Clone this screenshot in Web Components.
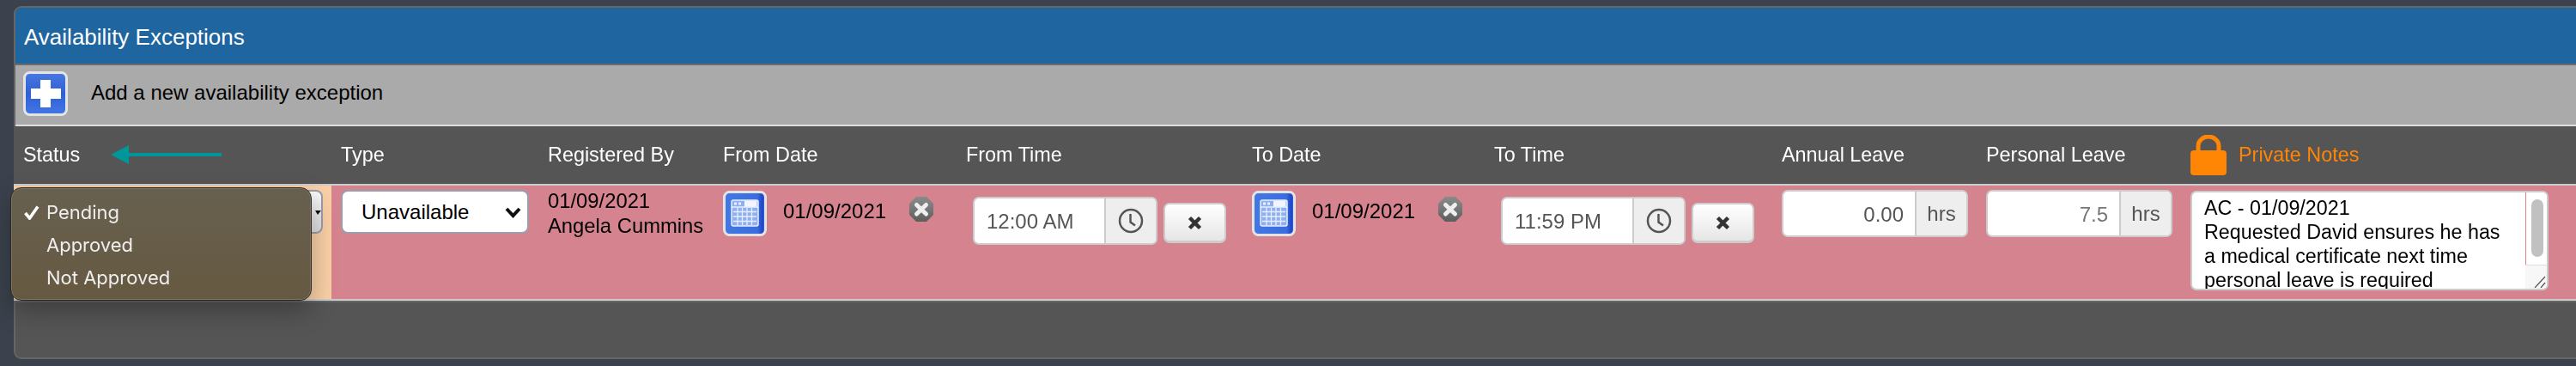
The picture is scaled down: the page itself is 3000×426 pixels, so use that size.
<!DOCTYPE html>
<html><head><meta charset="utf-8"><title>Availability Exceptions</title>
<style>
html,body{margin:0;padding:0;background:#3b424d;height:426px;overflow:hidden}
body{font-family:"Liberation Sans",Arial,sans-serif;font-size:24px;color:#000}
</style></head><body>
<av-panel>
  <span slot="title">Availability Exceptions</span>
  <span slot="add">Add a new availability exception</span>
  <av-head>
    <av-hcell>Status<av-arrow></av-arrow></av-hcell>
    <av-hcell>Type</av-hcell>
    <av-hcell>Registered By</av-hcell>
    <av-hcell>From Date</av-hcell>
    <av-hcell>From Time</av-hcell>
    <av-hcell>To Date</av-hcell>
    <av-hcell>To Time</av-hcell>
    <av-hcell>Annual Leave</av-hcell>
    <av-hcell>Personal Leave</av-hcell>
    <av-hcell class="private"><av-lock></av-lock><span>Private Notes</span></av-hcell>
  </av-head>
  <av-row>
    <av-status></av-status>
    <av-cell><av-select>Unavailable</av-select></av-cell>
    <av-cell><av-reg>01/09/2021<br>Angela Cummins</av-reg></av-cell>
    <av-cell><av-date>01/09/2021</av-date></av-cell>
    <av-cell><av-time>12:00 AM</av-time></av-cell>
    <av-cell><av-date>01/09/2021</av-date></av-cell>
    <av-cell><av-time>11:59 PM</av-time></av-cell>
    <av-cell><av-hours>0.00</av-hours></av-cell>
    <av-cell><av-hours style="--val:#777">7.5</av-hours></av-cell>
    <av-cell><av-notes>AC - 01/09/2021<br>Requested David ensures he has<br>a medical certificate next time<br>personal leave is required</av-notes></av-cell>
  </av-row>
</av-panel>
<script>
const COLS='370px 241px 204px 283px 333px 282px 335px 238px 238px 460px';
function def(name,html){
  const t=document.createElement('template');t.innerHTML=html;
  customElements.define(name,class extends HTMLElement{
    constructor(){super();this.attachShadow({mode:'open'}).appendChild(t.content.cloneNode(true));}
  });
}
def('av-panel',`<style>
:host{display:block;margin:7px 0 0 16px;width:2984px;height:411px;box-sizing:border-box;border:solid #666;border-width:2px 0 2px 2px;border-radius:9px 0 0 9px;background:#555;position:relative;filter:blur(.4px)}
.title{height:65px;background:#1f659f;color:#fff;font-size:26px;display:flex;align-items:center;padding:3px 0 0 10px;box-sizing:border-box;border-radius:7px 0 0 0}
.add{height:69px;background:#aaa;border-top:2px solid #6b6b6b;border-bottom:2px solid #ddd;display:flex;align-items:center;gap:27px;padding-left:9px;font-size:24px;box-sizing:content-box}
.add span{display:block;margin-bottom:5px}
svg{display:block;margin-bottom:3px}
</style>
<div class="title"><slot name="title"></slot></div>
<div class="add">
<svg width="52" height="52" viewBox="0 0 52 52"><defs><linearGradient id="p" x1="0" y1="0" x2="0" y2="1"><stop offset="0" stop-color="#4a79e0"/><stop offset=".5" stop-color="#2f5fd6"/><stop offset="1" stop-color="#4477e4"/></linearGradient></defs>
<rect x="1.500" y="1.500" width="49" height="49" rx="6" fill="url(#p)" stroke="#e4e4e4" stroke-width="3"/>
<path d="M20 10h12v10h12v12H32v10H20V32H9V20h11z" fill="#fff"/></svg>
<span><slot name="add"></slot></span></div>
<slot></slot>`);
def('av-head',`<style>:host{display:grid;grid-template-columns:${COLS};height:67px;margin-left:-2px;color:#fff;background:#555}</style><slot></slot>`);
def('av-hcell',`<style>:host{display:flex;align-items:center;padding-left:11px;font-size:23.400px;position:relative;white-space:nowrap}
:host(.private){color:#ff8505;gap:14px}</style><slot></slot>`);
def('av-arrow',`<style>:host{display:block;position:absolute;left:113px;top:22px}svg{display:block}</style>
<svg width="130" height="22" viewBox="0 0 130 22"><path d="M0 11 21 0v9h108v4H21v9z" fill="#00979a"/></svg>`);
def('av-lock',`<style>:host{display:block}svg{display:block}</style>
<svg width="42" height="47" viewBox="0 0 42 47"><rect x="0" y="18" width="42" height="29" rx="4" fill="#ff8505"/><path d="M9 20V13a12 11 0 0 1 24 0v7" fill="none" stroke="#ff8505" stroke-width="5"/></svg>`);
def('av-row',`<style>:host{display:grid;grid-template-columns:${COLS};height:132px;margin-left:-2px;background:#d5838f;border-top:2px solid #ccc;border-bottom:2px solid #ccc;box-shadow:0 2px 0 #666;position:relative}</style><slot></slot>`);
def('av-cell',`<style>:host{display:block;padding-left:11px;min-width:0}</style><slot></slot>`);
def('av-status',`<style>
:host{display:block;background:#f9cfa5;position:relative;padding:5px 10px 0 11px}
.sel{height:51px;box-sizing:border-box;border:2px solid #9a9eaa;border-radius:8px;background:linear-gradient(#fafafa,#dcdcdc)}
.menu{position:absolute;left:-4px;top:2px;width:351px;height:132px;box-sizing:border-box;border-radius:13px;border:1px solid #2a2822;background:linear-gradient(#67604f,#665941);box-shadow:inset 0 0 0 1px #7b7363,0 12px 30px rgba(0,0,0,.28);color:#eee;font:22px Inter,"Liberation Sans",sans-serif;padding-top:9px;z-index:2}
.it{height:38px;display:flex;align-items:center;padding-left:41px;position:relative}
.it svg{position:absolute;left:15px;top:11px}
.ar{position:absolute;left:351px;top:28px;display:block}
</style>
<div class="sel"></div>
<svg class="ar" width="7" height="7" viewBox="0 0 7 7"><path d="M0 1h7L3 6z" fill="#111"/></svg>
<div class="menu">
<div class="it"><svg width="18" height="17" viewBox="0 0 18 17"><path d="M1.500 9 6.500 15 16 1.500" fill="none" stroke="#fff" stroke-width="3.600"/></svg>Pending</div>
<div class="it">Approved</div>
<div class="it">Not Approved</div>
</div>`);
def('av-select',`<style>
:host{display:flex;align-items:center;width:219px;height:51px;box-sizing:border-box;margin-top:5px;border:2px solid #9a9eaa;border-radius:8px;background:#fff;padding-left:22px;position:relative;font-size:24px}
svg{position:absolute;right:7px;top:18px}
</style><slot></slot><svg width="19" height="13" viewBox="0 0 19 13"><path d="M2 2l7.500 8L17 2" fill="none" stroke="#111" stroke-width="4"/></svg>`);
def('av-reg',`<style>:host{display:block;padding-top:4px;line-height:28.500px;white-space:nowrap;font-size:23.800px}</style><slot></slot>`);
def('av-date',`<style>
:host{display:flex;align-items:flex-start;padding-top:6px;white-space:nowrap}
.t{margin:10px 26px 0 19px;width:120px;line-height:28px}
.x{margin-top:6px}svg{display:block;flex:none}
</style>
<svg width="51" height="53" viewBox="0 0 51 53"><defs><linearGradient id="c" x1="0" y1="0" x2="1" y2="0"><stop offset="0" stop-color="#4377e2"/><stop offset=".8" stop-color="#3a6ee0"/><stop offset=".93" stop-color="#1f45c4"/><stop offset="1" stop-color="#4a7be4"/></linearGradient></defs>
<rect x="1.500" y="1.500" width="48" height="50" rx="6" fill="url(#c)" stroke="#e3e3e3" stroke-width="3"/>
<path d="M12 11h27a2 2 0 0 1 2 2v26a2 2 0 0 1-2 2H12a2 2 0 0 1-2-2V13a2 2 0 0 1 2-2z" fill="#8fb0ee" stroke="#e8eeff" stroke-width="1.500"/>
<path d="M25 11.500h14.500V19H25z" fill="#f2f5ff"/>
<g stroke="#e8eeff" stroke-width="1.300" fill="none"><path d="M10 19h31M12 24.500h27M12 30h27M12 35.500h27M17 20v20M22.500 20v20M28 20v20M33.500 20v20"/></g>
<path d="M13 13.500h3v3h-3zM18 13.500h3v3h-3z" fill="#e8eeff"/></svg>
<span class="t"><slot></slot></span>
<svg class="x" width="30" height="31" viewBox="0 0 30 31"><defs><linearGradient id="g" x1="0" y1="0" x2="0" y2="1"><stop offset="0" stop-color="#8a8a8a"/><stop offset=".5" stop-color="#777"/><stop offset="1" stop-color="#5c5c5c"/></linearGradient></defs>
<path d="M9 1h12l8 8v13l-8 8H9l-8-8V9z" fill="url(#g)"/><path d="M9.500 10.500 20.500 21M20.500 10.500 9.500 21" stroke="#eee" stroke-width="5" stroke-linecap="round"/></svg>`);
def('av-time',`<style>
:host{display:flex;align-items:flex-start;gap:7px;padding:13px 0 0 8px;color:#555;white-space:nowrap}
.g{display:flex;width:215px;height:56px;box-sizing:border-box;border:2px solid #ccc;border-radius:7px;overflow:hidden;background:#fff}
.t{flex:none;width:151px;box-sizing:border-box;padding:2px 0 0 14px;display:flex;align-items:center}
.c{flex:1;background:#eee;border-left:2px solid #ccc;display:flex;align-items:center;justify-content:center}
.b{width:73px;height:47px;box-sizing:border-box;margin-top:7px;border:2px solid #ccc;border-bottom-width:3px;border-radius:7px;background:linear-gradient(#fff,#e6e6e6);display:flex;align-items:center;justify-content:center}
svg{display:block}
</style>
<div class="g"><div class="t"><slot></slot></div><div class="c"><svg width="30" height="30" viewBox="0 0 30 30"><circle cx="15" cy="15" r="13" fill="none" stroke="#555" stroke-width="2.500"/><path d="M14.500 7v9.500l5.500 4" fill="none" stroke="#555" stroke-width="2.500"/></svg></div></div>
<div class="b"><svg width="17" height="17" viewBox="0 0 17 17"><path d="M2.500 2.500l12 12M14.500 2.500l-12 12" stroke="#333" stroke-width="4.500"/></svg></div>`);
def('av-hours',`<style>
:host{display:flex;width:217px;height:55px;box-sizing:border-box;margin-top:5px;border:2px solid #ccc;border-radius:7px;overflow:hidden;background:#fff;color:#555}
.v{flex:none;width:153px;box-sizing:border-box;padding:3px 13px 0 0;display:flex;align-items:center;justify-content:flex-end;color:var(--val,#555)}
.u{flex:1;background:#eee;border-left:2px solid #ccc;display:flex;align-items:center;justify-content:center}
</style><div class="v"><slot></slot></div><div class="u">hrs</div>`);
def('av-notes',`<style>
:host{display:block;position:relative;width:417px;height:116px;box-sizing:border-box;margin-top:6px;border:2px solid #ccc;border-radius:7px;background:#fff;overflow:hidden;padding:4px 28px 0 14px;line-height:28px;font-size:23.300px;white-space:nowrap;color:#000}
.sb{position:absolute;right:0;top:0;bottom:0;width:25px;background:#fff;border-left:1px solid #d5838f;box-sizing:border-box}
.th{position:absolute;right:4px;top:8px;width:14px;height:67px;border-radius:7px;background:#c1c1c1}
.rs{position:absolute;right:0;bottom:0;width:25px;height:27px;background:#f7f7f7;border-top:1px solid #ddd}
svg{position:absolute;right:1px;bottom:1px}
</style><slot></slot><div class="sb"><div class="th"></div><div class="rs"><svg width="14" height="14" viewBox="0 0 14 14"><path d="M1 14 13 1M8 14l5-6" stroke="#555" stroke-width="1.200" fill="none"/></svg></div></div>`);
</script>
</body></html>
